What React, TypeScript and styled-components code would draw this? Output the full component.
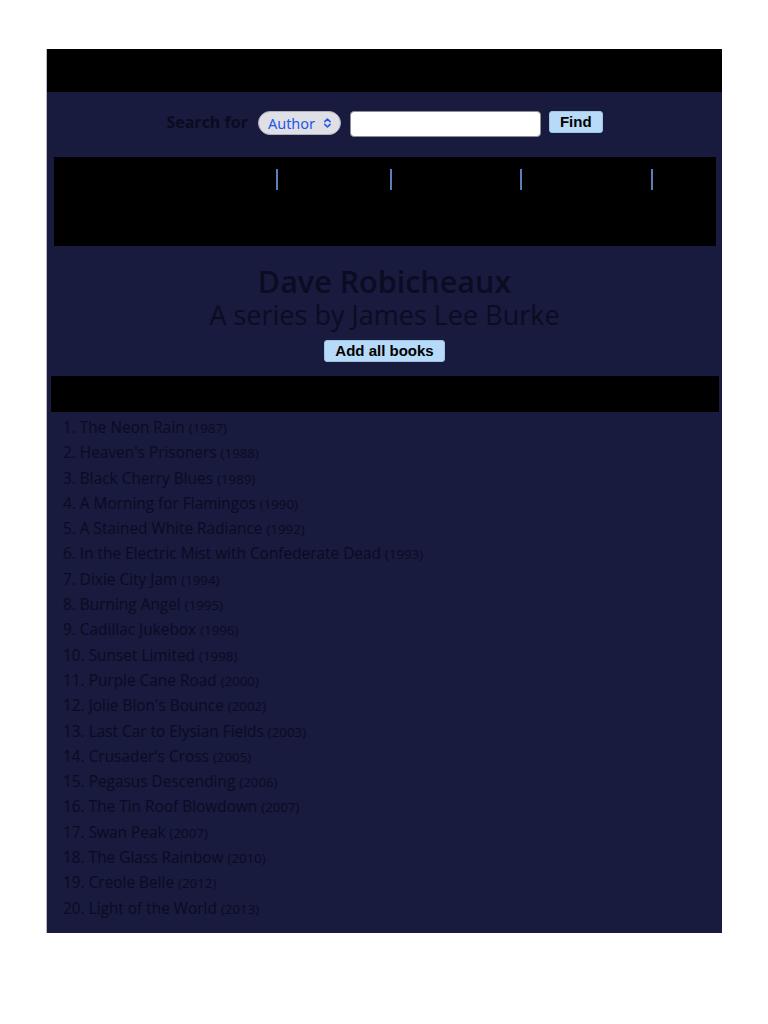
import React from "react";
import styled, { createGlobalStyle } from "styled-components";

interface Book {
  title: string;
  year: number;
}

const books: Book[] = [
  { title: "The Neon Rain", year: 1987 },
  { title: "Heaven's Prisoners", year: 1988 },
  { title: "Black Cherry Blues", year: 1989 },
  { title: "A Morning for Flamingos", year: 1990 },
  { title: "A Stained White Radiance", year: 1992 },
  { title: "In the Electric Mist with Confederate Dead", year: 1993 },
  { title: "Dixie City Jam", year: 1994 },
  { title: "Burning Angel", year: 1995 },
  { title: "Cadillac Jukebox", year: 1996 },
  { title: "Sunset Limited", year: 1998 },
  { title: "Purple Cane Road", year: 2000 },
  { title: "Jolie Blon's Bounce", year: 2002 },
  { title: "Last Car to Elysian Fields", year: 2003 },
  { title: "Crusader's Cross", year: 2005 },
  { title: "Pegasus Descending", year: 2006 },
  { title: "The Tin Roof Blowdown", year: 2007 },
  { title: "Swan Peak", year: 2007 },
  { title: "The Glass Rainbow", year: 2010 },
  { title: "Creole Belle", year: 2012 },
  { title: "Light of the World", year: 2013 },
];

// nav separators (invisible black-on-black links in the original)
const navWidths = [114, 130, 131, 64];

const GlobalStyle = createGlobalStyle`
  body {
    margin: 0;
    background: #ffffff;
    font-family: "Open Sans", "Noto Sans", sans-serif;
  }
`;

const Page = styled.div`
  padding: 49px 0 0 46px;
`;

const Container = styled.div`
  width: 675px;
  background: #181a3e;
  border-left: 1px solid #b9b9c4;
  padding-bottom: 12px;
`;

const TopBar = styled.div`
  height: 43px;
  background: #000000;
`;

const SearchRow = styled.form`
  display: flex;
  align-items: flex-start;
  justify-content: center;
  padding: 19px 0 0 0;
  height: 46px;
  box-sizing: border-box;
  margin-left: 0;
`;

const SearchLabel = styled.span`
  font-size: 16px;
  font-weight: 700;
  color: #0a0b1e;
  line-height: 20px;
  margin: 1px 10px 0 0;
`;

const SelectPill = styled.div`
  display: flex;
  align-items: center;
  gap: 8px;
  width: 83px;
  height: 24px;
  box-sizing: border-box;
  padding: 0 8px 0 9px;
  margin-right: 9px;
  background: #dfdfe6;
  border: 1px solid #aeb0bb;
  border-radius: 12px;
  color: #2457e6;
  font-family: "Noto Sans", sans-serif;
  font-size: 14.5px;
`;

const TextInput = styled.input`
  width: 191px;
  height: 26px;
  box-sizing: border-box;
  margin: 0 8px 0 0;
  background: #ffffff;
  border: 1px solid #8d8d95;
  border-radius: 4px;
`;

const SmallButton = styled.button<{ $pad?: number }>`
  height: 22px;
  padding: 0 ${(p) => p.$pad ?? 10}px;
  background: #b6daf7;
  border: 1px solid #9fc3e4;
  border-radius: 3px;
  font-family: "Liberation Sans", Arial, sans-serif;
  font-size: 15px;
  font-weight: 700;
  color: #000000;
  line-height: 18px;
`;

const Nav = styled.nav`
  display: flex;
  margin: 19px 6px 0 7px;
  height: 89px;
  box-sizing: border-box;
  padding: 12px 0 0 222px;
  background: #000000;
`;

const NavItem = styled.a<{ $w: number }>`
  display: block;
  width: ${(p) => p.$w}px;
  height: 21px;
  border-left: 2px solid #5b80b9;
`;

const Heading = styled.div`
  text-align: center;
  color: #0b0c22;
  padding-top: 17px;
`;

const Title = styled.h1`
  margin: 0;
  font-size: 30.5px;
  font-weight: 600;
  line-height: 36px;
`;

const Subtitle = styled.h2`
  margin: 0;
  font-size: 27px;
  font-weight: 400;
  line-height: 32px;
`;

const ButtonRow = styled.div`
  padding-top: 9px;
  display: flex;
  justify-content: center;
`;

const ListBar = styled.div`
  margin: 14px 3px 0 4px;
  height: 36px;
  background: #000000;
`;

const BookList = styled.ol`
  list-style: none;
  margin: 0;
  padding: 3px 0 0 16px;
`;

const BookItem = styled.li`
  height: 25.3px;
  font-size: 15.4px;
  line-height: 25.3px;
  color: #0a0b22;
`;

const Year = styled.span`
  font-size: 13.3px;
  line-height: 1;
`;

const UpDown = () => (
  <svg width="10" height="12" viewBox="0 0 10 12" fill="none" stroke="#2457e6" strokeWidth="1.8" strokeLinecap="round" strokeLinejoin="round">
    <path d="M2 4.5 5 1.5 8 4.5" />
    <path d="M2 7.5 5 10.5 8 7.5" />
  </svg>
);

export default function App() {
  return (
    <>
      <GlobalStyle />
      <Page>
        <Container>
          <TopBar />
          <SearchRow onSubmit={(e) => e.preventDefault()}>
            <SearchLabel>Search for</SearchLabel>
            <SelectPill>
              <span>Author</span>
              <UpDown />
            </SelectPill>
            <TextInput type="text" />
            <SmallButton type="submit">Find</SmallButton>
          </SearchRow>
          <Nav>
            {navWidths.map((w, i) => (
              <NavItem key={i} $w={w} />
            ))}
          </Nav>
          <Heading>
            <Title>Dave Robicheaux</Title>
            <Subtitle>A series by James Lee Burke</Subtitle>
            <ButtonRow>
              <SmallButton type="button">Add all books</SmallButton>
            </ButtonRow>
          </Heading>
          <ListBar />
          <BookList>
            {books.map((b, i) => (
              <BookItem key={b.title}>
                {i + 1}. {b.title} <Year>({b.year})</Year>
              </BookItem>
            ))}
          </BookList>
        </Container>
      </Page>
    </>
  );
}
